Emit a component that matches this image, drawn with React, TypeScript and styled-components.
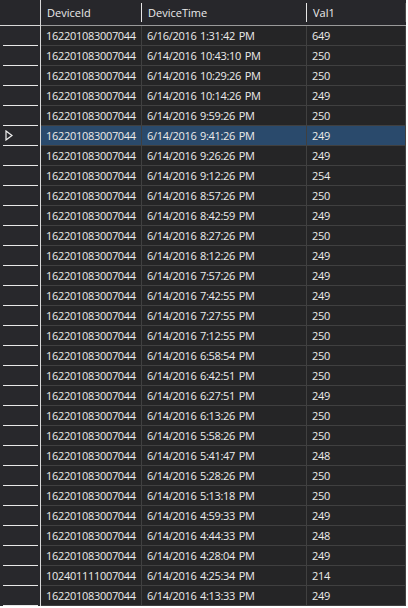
import React from "react";
import styled, { createGlobalStyle } from "styled-components";

const Global = createGlobalStyle`
  html, body { margin: 0; padding: 0; background: #ffffff; }
  body { font-family: "Open Sans", "Noto Sans", sans-serif; }
`;

type Row = { id: string; time: string; val: string };

const T = "6/14/2016 ";
const ID = "162201083007044";
const rows: Row[] = [
  { id: ID, time: "6/16/2016 1:31:42 PM", val: "649" },
  { id: ID, time: T + "10:43:10 PM", val: "250" },
  { id: ID, time: T + "10:29:26 PM", val: "250" },
  { id: ID, time: T + "10:14:26 PM", val: "249" },
  { id: ID, time: T + "9:59:26 PM", val: "250" },
  { id: ID, time: T + "9:41:26 PM", val: "249" },
  { id: ID, time: T + "9:26:26 PM", val: "249" },
  { id: ID, time: T + "9:12:26 PM", val: "254" },
  { id: ID, time: T + "8:57:26 PM", val: "250" },
  { id: ID, time: T + "8:42:59 PM", val: "249" },
  { id: ID, time: T + "8:27:26 PM", val: "250" },
  { id: ID, time: T + "8:12:26 PM", val: "249" },
  { id: ID, time: T + "7:57:26 PM", val: "249" },
  { id: ID, time: T + "7:42:55 PM", val: "249" },
  { id: ID, time: T + "7:27:55 PM", val: "250" },
  { id: ID, time: T + "7:12:55 PM", val: "250" },
  { id: ID, time: T + "6:58:54 PM", val: "250" },
  { id: ID, time: T + "6:42:51 PM", val: "250" },
  { id: ID, time: T + "6:27:51 PM", val: "249" },
  { id: ID, time: T + "6:13:26 PM", val: "250" },
  { id: ID, time: T + "5:58:26 PM", val: "250" },
  { id: ID, time: T + "5:41:47 PM", val: "248" },
  { id: ID, time: T + "5:28:26 PM", val: "250" },
  { id: ID, time: T + "5:13:18 PM", val: "250" },
  { id: ID, time: T + "4:59:33 PM", val: "249" },
  { id: ID, time: T + "4:44:33 PM", val: "248" },
  { id: ID, time: T + "4:28:04 PM", val: "249" },
  { id: "102401111007044", time: T + "4:25:34 PM", val: "214" },
  { id: ID, time: T + "4:13:33 PM", val: "249" },
];

const SELECTED = 5;

const Grid = styled.div`
  width: 406px;
  background: #252526;
  color: #ececec;
  font-size: 11px;
  display: flex;
  flex-direction: column;
`;

const HeaderRow = styled.div`
  display: grid;
  grid-template-columns: 41px 101px 165px 99px;
  height: 26px;
  box-sizing: border-box;
  border-bottom: 1px solid #9a9a9a;
  background: #27272b;
`;

const Corner = styled.div`
  border-right: 1px solid #d8d8d8;
  border-bottom: 1px solid #d8d8d8;
  margin-bottom: -1px;
`;

const HeaderCell = styled.div<{ $last?: boolean }>`
  display: flex;
  align-items: center;
  padding-left: 6px;
  position: relative;
  &::after {
    content: "";
    position: absolute;
    right: 0;
    top: 3px;
    bottom: 3px;
    width: 1px;
    background: ${(p) => (p.$last ? "#4a4a4a" : "#e6e6e6")};
  }
`;

const DataRow = styled.div<{ $selected?: boolean }>`
  display: grid;
  grid-template-columns: 41px 101px 165px 99px;
  height: 20px;
  background: ${(p) => (p.$selected ? "#2a4a6c" : "#252526")};
`;

const RowHeader = styled.div`
  background: #28282c;
  border-right: 1px solid #d8d8d8;
  padding: 0 2px 0 3px;
  display: flex;
`;

const RowHeaderInner = styled.div`
  flex: 1;
  border-bottom: 1px solid #e8e8e8;
  display: flex;
  align-items: center;
  padding-left: 2px;
`;

const Cell = styled.div`
  display: flex;
  align-items: center;
  padding-left: 5px;
  letter-spacing: -0.3px;
  word-spacing: 1px;
  border-right: 1px solid #404040;
  border-bottom: 1px solid #404040;
  white-space: nowrap;
  overflow: hidden;
`;

const Arrow = () => (
  <svg width="8" height="11" viewBox="0 0 8 11">
    <path d="M1 1 L7 5.5 L1 10 Z" fill="none" stroke="#f0f0f0" strokeWidth="1.2" />
  </svg>
);

export default function App() {
  return (
    <>
      <Global />
      <Grid>
        <HeaderRow>
          <Corner />
          <HeaderCell>DeviceId</HeaderCell>
          <HeaderCell>DeviceTime</HeaderCell>
          <HeaderCell $last>Val1</HeaderCell>
        </HeaderRow>
        {rows.map((r, i) => (
          <DataRow key={i} $selected={i === SELECTED}>
            <RowHeader>
              <RowHeaderInner>{i === SELECTED && <Arrow />}</RowHeaderInner>
            </RowHeader>
            <Cell>{r.id}</Cell>
            <Cell>{r.time}</Cell>
            <Cell>{r.val}</Cell>
          </DataRow>
        ))}
      </Grid>
    </>
  );
}
